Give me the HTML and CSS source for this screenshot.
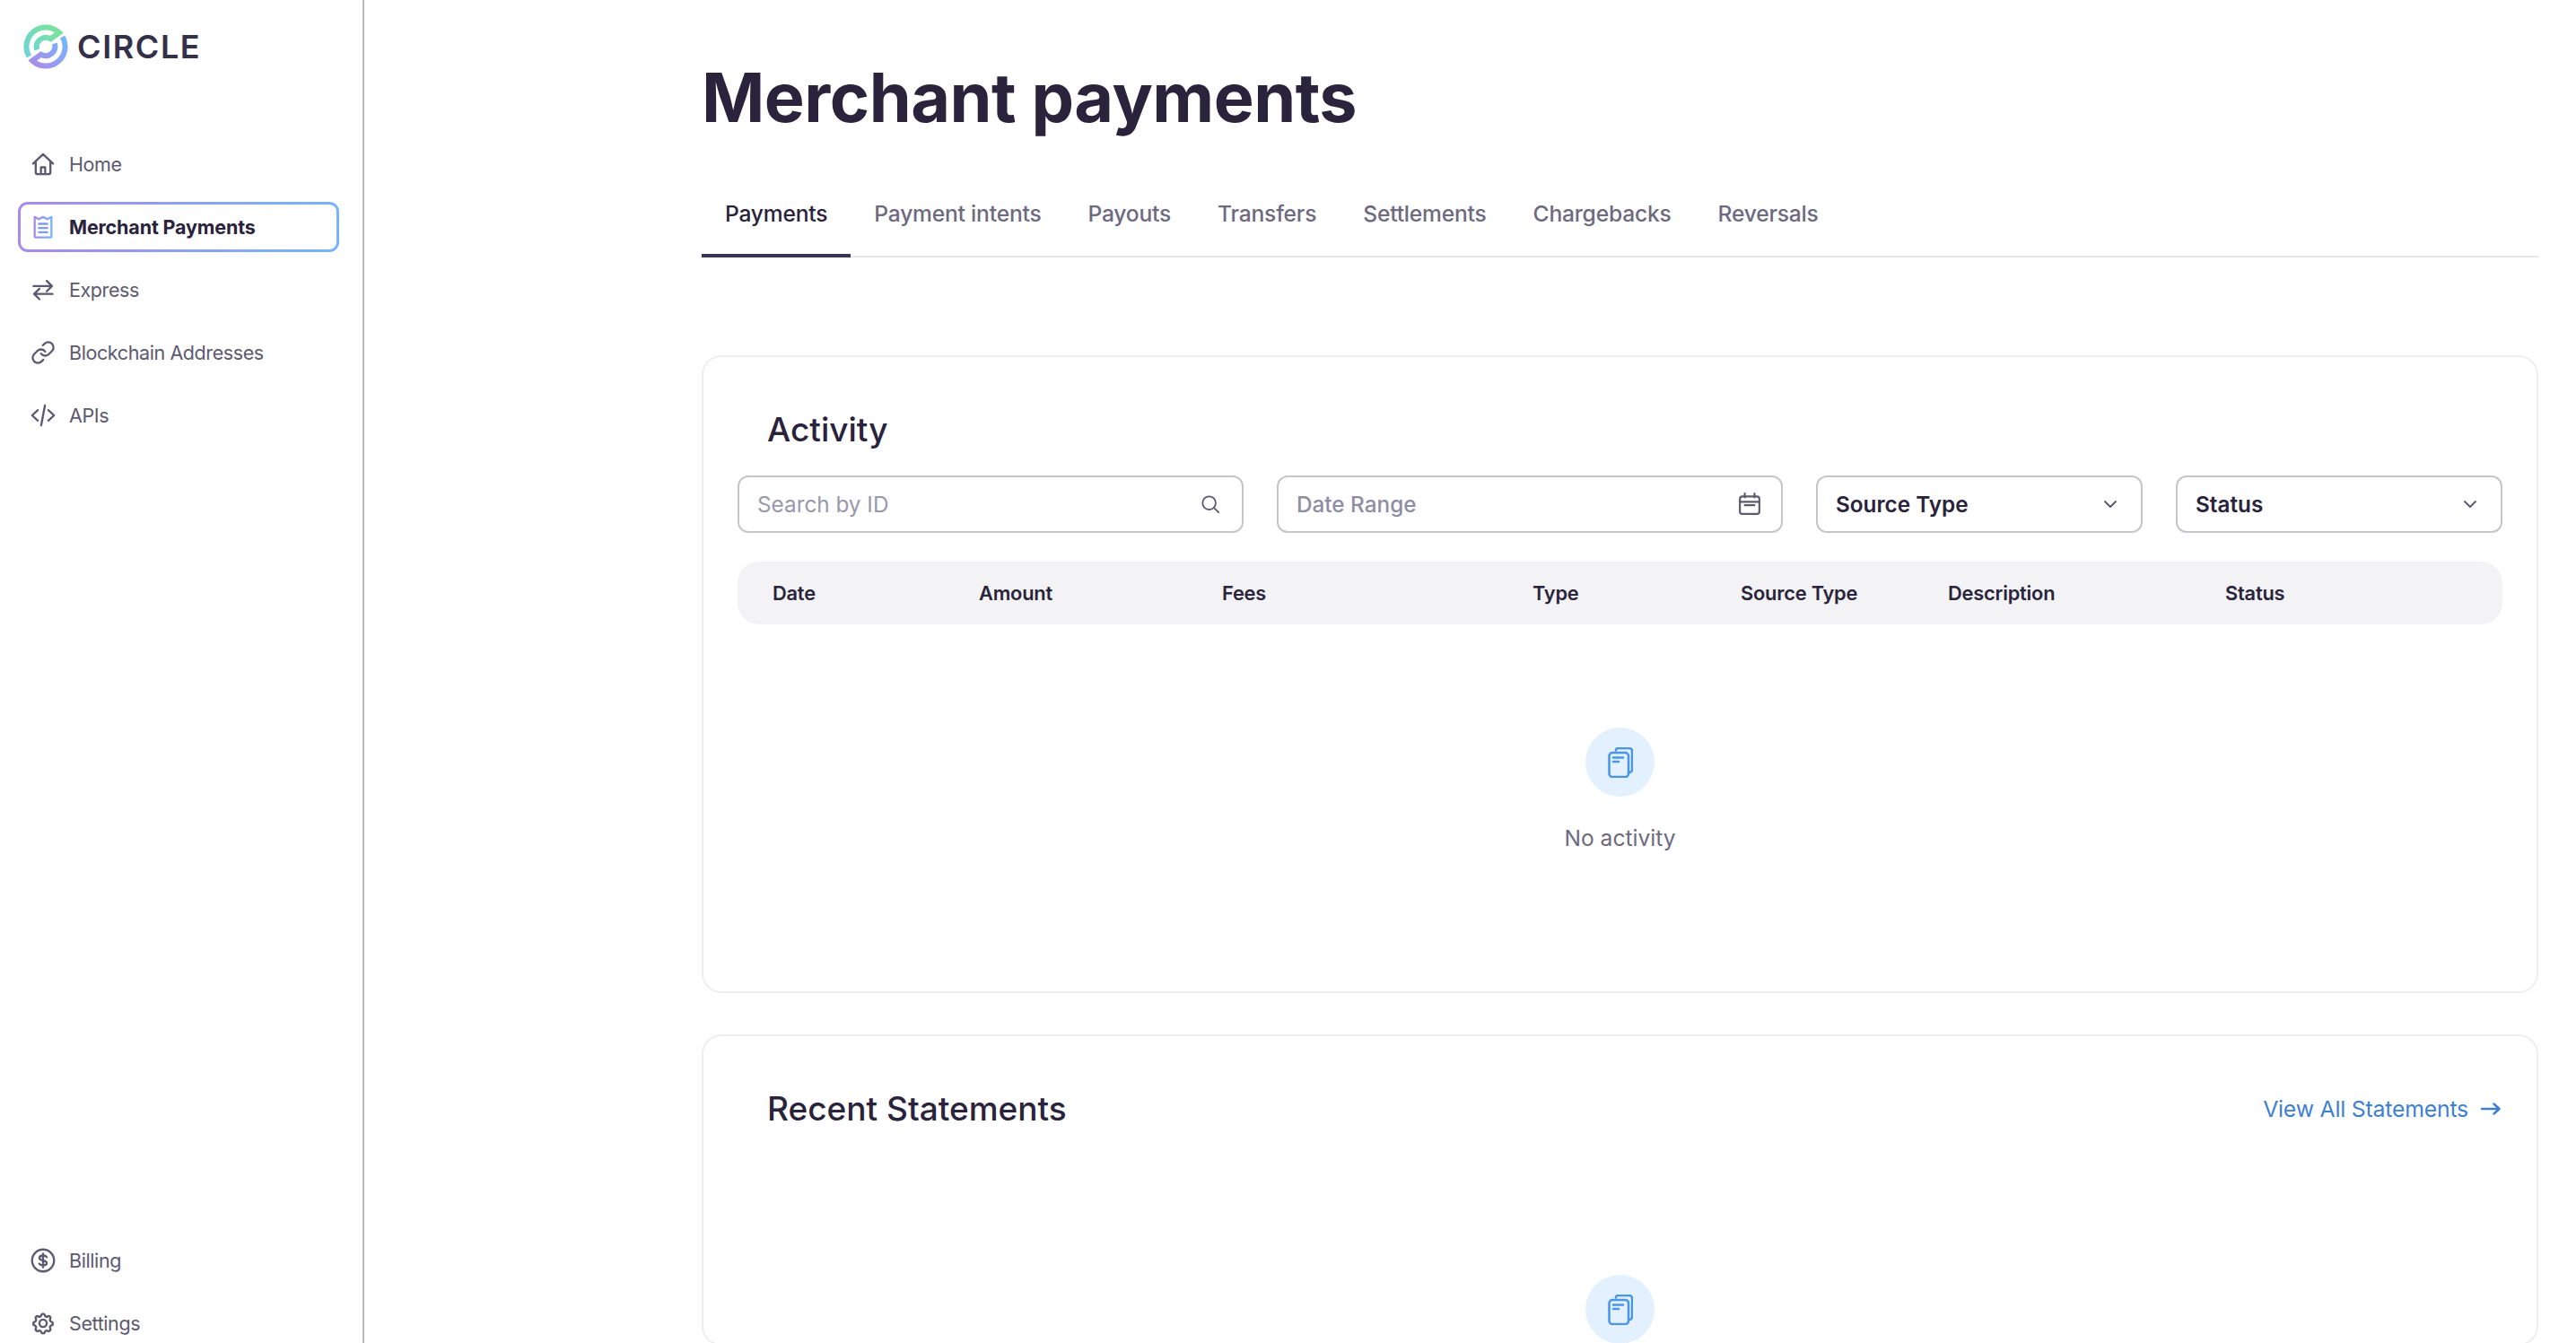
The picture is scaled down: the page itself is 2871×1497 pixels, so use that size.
FILE: index.html
```html
<!DOCTYPE html>
<html lang="en">
<head>
  <meta charset="UTF-8" />
  <title>Merchant payments</title>
  <link rel="stylesheet" href="styles.css">
</head>
<body>

  <aside class="sidebar">
    <div class="logo">
      <svg class="logo-mark" viewBox="0 0 50 50" fill="none" stroke-width="6">
        <defs>
          <linearGradient id="logoA" gradientUnits="userSpaceOnUse" x1="38" y1="4" x2="8" y2="40">
            <stop offset="0" stop-color="#7be29b" />
            <stop offset="1" stop-color="#6fd2dc" />
          </linearGradient>
          <linearGradient id="logoB" gradientUnits="userSpaceOnUse" x1="44" y1="12" x2="10" y2="46">
            <stop offset="0" stop-color="#74b8fb" />
            <stop offset="1" stop-color="#ab8bea" />
          </linearGradient>
        </defs>
        <path stroke="url(#logoA)" d="M6.400 36A21.600 21.600 0 0 1 40 9.500L30.500 16.300A10.500 10.500 0 0 0 15.200 28.500" />
        <path stroke="url(#logoB)" d="M43.600 14A21.600 21.600 0 0 1 10 40.500L19.500 33.700A10.500 10.500 0 0 0 34.800 21.500" />
      </svg>
      <span class="logo-text">CIRCLE</span>
    </div>

    <nav class="nav">
      <a class="nav-item">
        <svg class="nav-icon" viewBox="0 0 24 24"><path d="M2.5 11.5 12 2.500l9.500 9M5 9.500V20a1.500 1.500 0 0 0 1.500 1.500h11A1.500 1.500 0 0 0 19 20V9.500M10 21.500V15h4v6.500" /></svg>
        Home
      </a>
      <a class="nav-item active">
        <svg class="nav-icon receipt" viewBox="0 0 24 24">
          <defs>
            <linearGradient id="receiptGrad" x1="0" y1="0" x2="1" y2="0">
              <stop offset="0" stop-color="#a78bea" />
              <stop offset="1" stop-color="#74b5fb" />
            </linearGradient>
          </defs>
          <path stroke="url(#receiptGrad)" d="M4 2.500l4 2 4-2 4 2 4-2V21a1 1 0 0 1-1 1H5a1 1 0 0 1-1-1z" />
          <path stroke="#7f9bf2" d="M8 9h8M8 13h8M8 17h8" />
        </svg>
        Merchant Payments
      </a>
      <a class="nav-item">
        <svg class="nav-icon" viewBox="0 0 24 24"><path d="M3 8.500h17M15.500 3.500l5 5-5 5M21 16H4M8.500 11l-5 5 5 5" /></svg>
        Express
      </a>
      <a class="nav-item">
        <svg class="nav-icon" viewBox="0 0 24 24"><path d="M10 13a5 5 0 0 0 7.540.54l3-3a5 5 0 0 0-7.070-7.070l-1.720 1.710" /><path d="M14 11a5 5 0 0 0-7.540-.54l-3 3a5 5 0 0 0 7.070 7.070l1.710-1.710" /></svg>
        Blockchain Addresses
      </a>
      <a class="nav-item">
        <svg class="nav-icon" viewBox="0 0 24 24"><path d="M7 7l-5.500 5L7 17M17 7l5.500 5L17 17M13.800 2.500 10.200 21.500" /></svg>
        APIs
      </a>
    </nav>

    <nav class="nav nav-bottom">
      <a class="nav-item">
        <svg class="nav-icon" viewBox="0 0 24 24"><circle cx="12" cy="12" r="10.500" /><path d="M15.500 8.800c-.6-1-1.900-1.500-3.500-1.500-2 0-3.500 1-3.500 2.400 0 3.300 7 1.500 7 4.700 0 1.400-1.500 2.300-3.500 2.300-1.700 0-3-.6-3.600-1.600M12 5.500v13" /></svg>
        Billing
      </a>
      <a class="nav-item">
        <svg class="nav-icon" viewBox="0 0 24 24"><path d="M10.325 3.317c.426-1.756 2.924-1.756 3.350 0a1.724 1.724 0 0 0 2.573 1.066c1.543-.94 3.310.826 2.370 2.370a1.724 1.724 0 0 0 1.065 2.572c1.756.426 1.756 2.924 0 3.350a1.724 1.724 0 0 0-1.066 2.573c.94 1.543-.826 3.310-2.370 2.370a1.724 1.724 0 0 0-2.572 1.065c-.426 1.756-2.924 1.756-3.350 0a1.724 1.724 0 0 0-2.573-1.066c-1.543.94-3.310-.826-2.370-2.370a1.724 1.724 0 0 0-1.065-2.572c-1.756-.426-1.756-2.924 0-3.350a1.724 1.724 0 0 0 1.066-2.573c-.94-1.543.826-3.310 2.370-2.370.996.608 2.296.07 2.572-1.065z" transform="translate(-.5 .9) scale(1.04)" /><circle cx="12" cy="12" r="3.500" /></svg>
        Settings
      </a>
    </nav>
  </aside>

  <main class="main">
    <h1 class="page-title">Merchant payments</h1>

    <div class="tabs">
      <a class="tab active">Payments</a>
      <a class="tab">Payment intents</a>
      <a class="tab">Payouts</a>
      <a class="tab">Transfers</a>
      <a class="tab">Settlements</a>
      <a class="tab">Chargebacks</a>
      <a class="tab">Reversals</a>
    </div>

    <section class="card activity">
      <h2 class="card-title">Activity</h2>

      <div class="filters">
        <div class="field">
          <span class="placeholder">Search by ID</span>
          <svg class="field-icon search" viewBox="0 0 24 24"><circle cx="10.500" cy="10.500" r="8" /><path d="M16.500 16.500 22 22" /></svg>
        </div>
        <div class="field">
          <span class="placeholder strong">Date Range</span>
          <svg class="field-icon calendar" viewBox="0 0 24 24"><rect x="2" y="4" width="20" height="18" rx="2.500" /><path d="M7 1v4M17 1v4M2 9.500h20M7 13h10" /></svg>
        </div>
        <div class="field">
          <span class="select-label">Source Type</span>
          <svg class="chevron" viewBox="0 0 24 24"><path d="M4 8l8 8 8-8" /></svg>
        </div>
        <div class="field">
          <span class="select-label">Status</span>
          <svg class="chevron" viewBox="0 0 24 24"><path d="M4 8l8 8 8-8" /></svg>
        </div>
      </div>

      <div class="table-head">
        <span>Date</span>
        <span>Amount</span>
        <span>Fees</span>
        <span>Type</span>
        <span>Source Type</span>
        <span>Description</span>
        <span>Status</span>
      </div>

      <div class="empty">
        <div class="empty-icon">
          <svg viewBox="0 0 28 34"><path d="M9 3.500V3a2 2 0 0 1 2-2h13a3 3 0 0 1 3 3v21a3 3 0 0 1-3 3h-1" /><rect x="1.500" y="6" width="21.500" height="27" rx="3.500" /><path d="M6 11.500h11M6 16h6" /></svg>
        </div>
        <p class="empty-text">No activity</p>
      </div>
    </section>

    <section class="card statements">
      <div class="card-head">
        <h2 class="card-title">Recent Statements</h2>
        <a class="view-all">
          View All Statements
          <svg viewBox="0 0 22 14"><path d="M1 7h19M14.500 1.500 20.500 7l-6 5.500" /></svg>
        </a>
      </div>

      <div class="empty">
        <div class="empty-icon">
          <svg viewBox="0 0 28 34"><path d="M9 3.500V3a2 2 0 0 1 2-2h13a3 3 0 0 1 3 3v21a3 3 0 0 1-3 3h-1" /><rect x="1.500" y="6" width="21.500" height="27" rx="3.500" /><path d="M6 11.500h11M6 16h6" /></svg>
        </div>
      </div>
    </section>
  </main>

</body>
</html>
```

FILE: styles.css
```css
* {
  box-sizing: border-box;
}

body {
  font-family: Inter, "Noto Sans", sans-serif;
  background: #fff;
  color: #29233b;
  display: flex;
  height: 100vh;
  margin: 0;
  overflow: hidden;
}

.sidebar {
  width: 406px;
  height: 100vh;
  flex-shrink: 0;
  padding-bottom: 0;
  border-right: 2px solid #b9b9bf;
  display: flex;
  flex-direction: column;
}

.logo {
  display: flex;
  align-items: center;
  gap: 10px;
  padding: 27px 0 0 26px;
}

.logo-mark {
  width: 50px;
  height: 50px;
}

.logo-text {
  font-size: 36px;
  font-weight: 600;
  letter-spacing: 1.6px;
  line-height: 50px;
  color: #34304a;
}

.nav {
  display: flex;
  flex-direction: column;
  gap: 14px;
  padding: 0 26px 0 20px;
  margin-top: 78px;
}

.nav-bottom {
  margin-top: auto;
  margin-bottom: -6px;
}

.nav-item {
  display: flex;
  align-items: center;
  gap: 15px;
  height: 56px;
  padding-left: 14px;
  border: 3px solid transparent;
  border-radius: 11px;
  font-size: 21.5px;
  letter-spacing: -0.4px;
  color: #5c5970;
}

.nav-item.active {
  font-weight: 700;
  letter-spacing: -0.15px;
  color: #29233b;
  background: linear-gradient(#fff, #fff) padding-box, linear-gradient(90deg, #a78bea, #74b5fb) border-box;
}

.nav-icon {
  width: 28px;
  height: 28px;
  margin-left: -3px;
  fill: none;
  stroke: #5c5970;
  stroke-width: 2;
  stroke-linecap: round;
  stroke-linejoin: round;
}

.main {
  flex: 1;
  min-width: 0;
  height: 100vh;
  overflow: hidden;
  padding: 0 42px 0 376px;
}

.page-title {
  margin: 0;
  padding-top: 64px;
  font-size: 75.5px;
  line-height: 90px;
  font-weight: 700;
  letter-spacing: -0.5px;
}

.tabs {
  display: flex;
  height: 133px;
  padding-top: 65px;
  align-items: flex-start;
  border-bottom: 2px solid #e6e6eb;
}

.tab {
  height: 68px;
  padding: 0 26px;
  font-size: 24.6px;
  line-height: 38px;
  font-weight: 500;
  letter-spacing: -0.2px;
  color: #6d6a80;
}

.tab.active {
  color: #29233b;
  border-bottom: 4px solid #3a3554;
}

.card {
  border: 2px solid #eeeef1;
  border-radius: 22px;
  padding: 0 38px;
}

.activity {
  margin-top: 109px;
  padding-bottom: 154px;
}

.statements {
  margin-top: 46px;
}

.card-title {
  margin: 58px 0 0 33px;
  font-size: 37px;
  line-height: 46px;
  font-weight: 500;
}

.filters {
  display: grid;
  grid-template-columns: 564px 564px 1fr 1fr;
  gap: 37px;
  margin-top: 28px;
}

.field {
  display: flex;
  align-items: center;
  justify-content: space-between;
  height: 64px;
  padding: 0 22px 0 20px;
  border: 2px solid #c6c6ca;
  border-radius: 12px;
  font-size: 24.3px;
}

.placeholder {
  color: #9a98ab;
}

.placeholder.strong {
  font-weight: 500;
  color: #8f8da3;
}

.select-label {
  font-weight: 600;
  color: #29233b;
}

.field-icon {
  width: 22px;
  height: 22px;
  fill: none;
  stroke: #5c5970;
  stroke-width: 2;
  stroke-linecap: round;
}

.field-icon.search {
  margin-right: 2px;
}

.field-icon.calendar {
  width: 26px;
  height: 26px;
}

.chevron {
  width: 18px;
  height: 18px;
  margin-right: 3px;
  fill: none;
  stroke: #5c5970;
  stroke-width: 2.500;
  stroke-linecap: round;
  stroke-linejoin: round;
}

.table-head {
  display: grid;
  grid-template-columns: 230px 271px 346px 232px 231px 309px 1fr;
  align-items: center;
  height: 70px;
  margin-top: 32px;
  padding-left: 39px;
  background: #f3f3f6;
  border-radius: 24px;
  font-size: 21.8px;
  font-weight: 600;
  letter-spacing: -0.2px;
}

.empty {
  display: flex;
  flex-direction: column;
  align-items: center;
  margin-top: 115px;
}

.statements .empty {
  margin-top: 162px;
}

.empty-icon {
  display: flex;
  align-items: center;
  justify-content: center;
  width: 77px;
  height: 77px;
  border-radius: 50%;
  background: #e3f1fe;
}

.empty-icon svg {
  width: 28px;
  height: 34px;
  fill: none;
  stroke: #4a95e6;
  stroke-width: 2.500;
  stroke-linecap: round;
  stroke-linejoin: round;
}

.empty-text {
  margin: 29px 0 0;
  font-size: 24.6px;
  line-height: 34px;
  color: #6d6a80;
}

.card-head {
  display: flex;
  justify-content: space-between;
  align-items: center;
  margin-top: 58px;
}

.card-head .card-title {
  margin-top: 0;
}

.view-all {
  display: flex;
  align-items: center;
  gap: 14px;
  margin-right: 2px;
  font-size: 24.8px;
  letter-spacing: -0.2px;
  color: #3d7fd4;
}

.view-all svg {
  width: 22px;
  height: 14px;
  fill: none;
  stroke: #3d7fd4;
  stroke-width: 2.500;
  stroke-linecap: round;
  stroke-linejoin: round;
}
```
